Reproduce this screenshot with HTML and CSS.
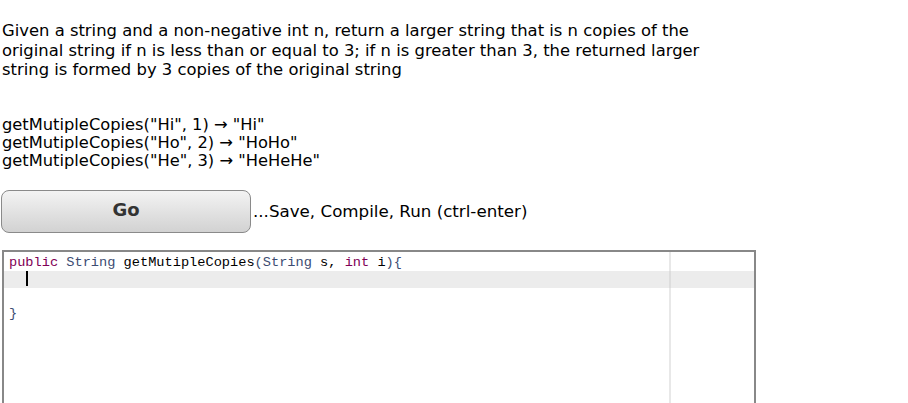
FILE: index.html
```html
<!DOCTYPE html>
<html>
<head>
<meta charset="utf-8">
<link rel="stylesheet" href="styles.css">
</head>
<body>
<div class="page">
  <p class="desc">Given a string and a non-negative int n, return a larger string that is n copies of the<br>original string if n is less than or equal to 3; if n is greater than 3, the returned larger<br>string is formed by 3 copies of the original string</p>
  <div class="examples">
    <div>getMutipleCopies("Hi", 1) → "Hi"</div>
    <div>getMutipleCopies("Ho", 2) → "HoHo"</div>
    <div>getMutipleCopies("He", 3) → "HeHeHe"</div>
  </div>
  <div class="run-row">
    <button class="go">Go</button>
    <span class="run-hint">...Save, Compile, Run (ctrl-enter)</span>
  </div>
  <div class="editor">
    <div class="print-margin"></div>
    <div class="line"><span class="kw">public</span> <span class="ty">String</span> getMutipleCopies<span class="pn">(</span><span class="ty">String</span> s, <span class="kw">int</span> i<span class="pn">){</span></div>
    <div class="line active"><span class="indent">  </span><span class="cursor"></span></div>
    <div class="line"></div>
    <div class="line"><span class="pn">}</span></div>
  </div>
</div>
</body>
</html>
```
FILE: styles.css
```css
html, body {
  margin: 0;
  padding: 0;
  background: #fff;
}
.page {
  padding-left: 2px;
  color: #000;
}
.desc {
  margin: 21px 0 0 0;
  font-family: "DejaVu Sans", Verdana, sans-serif;
  font-size: 16.4px;
  line-height: 19.5px;
}
.examples {
  margin-top: 36px;
  font-family: "DejaVu Sans", Verdana, sans-serif;
  font-size: 16.3px;
  line-height: 18px;
}
.run-row {
  margin-top: 20px;
  display: flex;
  align-items: center;
  margin-left: -1px;
}
.go {
  width: 250px;
  height: 43px;
  border: 1px solid #8a8a8a;
  border-radius: 8px;
  background: linear-gradient(#f3f3f3, #d2d2d2);
  font-family: "DejaVu Sans", Verdana, sans-serif;
  font-weight: bold;
  font-size: 18px;
  color: #333;
  padding: 0 0 4px 0;
  margin: 0;
}
.run-hint {
  margin-left: 2px;
  font-family: "DejaVu Sans", Verdana, sans-serif;
  font-size: 16.7px;
}
.editor {
  position: relative;
  margin-top: 17px;
  width: 750px;
  height: 300px;
  border: 2px solid #888;
  padding-top: 2px;
  font-family: "Liberation Mono", Consolas, monospace;
  font-size: 13.65px;
  color: #000;
}
.print-margin {
  position: absolute;
  left: 665px;
  top: 0;
  bottom: 0;
  width: 2px;
  background: #e8e8e8;
}
.line {
  position: relative;
  height: 17px;
  line-height: 17px;
  padding-left: 5px;
  white-space: pre;
}
.line.active {
  background: rgba(200, 200, 200, 0.35);
}
.kw { color: #7f0055; }
.ty { color: #3c4c72; }
.pn { color: #3c4c72; }
.cursor {
  display: inline-block;
  width: 2px;
  height: 15px;
  background: #000;
  vertical-align: middle;
  margin-left: 1px;
}
```
